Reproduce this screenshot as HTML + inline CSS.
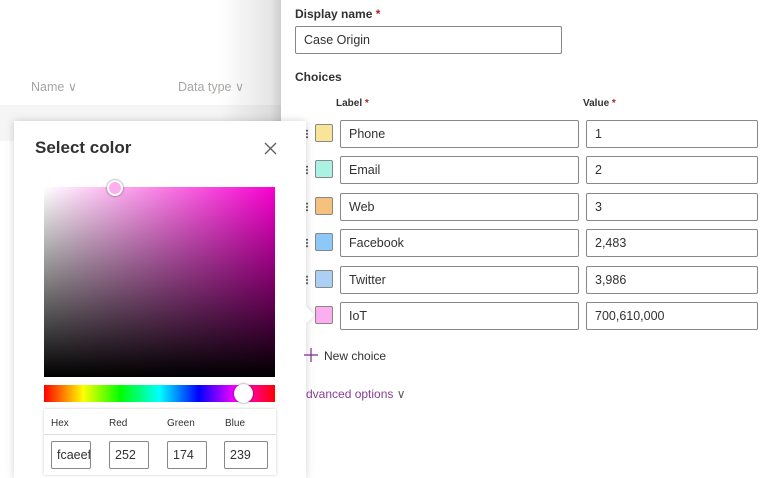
<!DOCTYPE html>
<html><head><style>
*{box-sizing:border-box;margin:0;padding:0}
body{width:768px;height:478px;overflow:hidden;position:relative;background:#fff;font-family:"Liberation Sans","DejaVu Sans",sans-serif;color:#323130}
.abs{position:absolute}
.inp{position:absolute;border:1px solid #8a8886;border-radius:2px;background:#fff;font-size:12.5px;padding-left:8px;display:flex;align-items:center;color:#323130}
.sw{position:absolute;width:18px;height:18px;border:1px solid #8a8886;border-radius:2px}
.dots{position:absolute;width:2px;height:10px;background:radial-gradient(circle,#555 0.9px,transparent 1.1px) 0 0/2px 3.3px;z-index:5}
</style></head><body>
<div class="abs" style="left:0;top:0;width:281px;height:478px;background:linear-gradient(90deg,#fff 0,#fff 220px,#e6e6e6 270px,#cfcfcf 281px)"></div>
<div class="abs" style="left:0;top:105px;width:281px;height:36px;background:rgba(0,0,0,0.04)"></div>
<div class="abs" style="left:31px;top:79px;font-size:12.5px;color:#a8a6a4">Name ∨</div>
<div class="abs" style="left:178px;top:79px;font-size:12.5px;color:#a8a6a4">Data type ∨</div>

<div class="abs" style="left:281px;top:0;width:487px;height:478px;background:#fff"></div>
<div class="abs" style="left:295px;top:7px;font-size:12px;font-weight:bold">Display name <span style="color:#a4262c">*</span></div>
<div class="inp" style="left:295px;top:26px;width:267px;height:28px">Case Origin</div>
<div class="abs" style="left:295px;top:70px;font-size:12px;font-weight:bold">Choices</div>
<div class="abs" style="left:336px;top:98px;font-size:10px;font-weight:bold">Label <span style="color:#a4262c">*</span></div>
<div class="abs" style="left:583px;top:98px;font-size:10px;font-weight:bold">Value <span style="color:#a4262c">*</span></div>

<div class="dots" style="left:306px;top:129px"></div><div class="sw" style="left:315px;top:124px;background:#f8e59a"></div>
<div class="inp" style="left:340px;top:120px;width:239px;height:28px">Phone</div><div class="inp" style="left:586px;top:120px;width:172px;height:28px">1</div>
<div class="dots" style="left:306px;top:165px"></div><div class="sw" style="left:315px;top:160px;background:#a9f2e4"></div>
<div class="inp" style="left:340px;top:156px;width:239px;height:28px">Email</div><div class="inp" style="left:586px;top:156px;width:172px;height:28px">2</div>
<div class="dots" style="left:306px;top:202px"></div><div class="sw" style="left:315px;top:197px;background:#f4c17f"></div>
<div class="inp" style="left:340px;top:193px;width:239px;height:28px">Web</div><div class="inp" style="left:586px;top:193px;width:172px;height:28px">3</div>
<div class="dots" style="left:306px;top:238px"></div><div class="sw" style="left:315px;top:233px;background:#8ec8f8"></div>
<div class="inp" style="left:340px;top:229px;width:239px;height:28px">Facebook</div><div class="inp" style="left:586px;top:229px;width:172px;height:28px">2,483</div>
<div class="dots" style="left:306px;top:275px"></div><div class="sw" style="left:315px;top:270px;background:#acd0f4"></div>
<div class="inp" style="left:340px;top:266px;width:239px;height:28px">Twitter</div><div class="inp" style="left:586px;top:266px;width:172px;height:28px">3,986</div>
<div class="sw" style="left:315px;top:306px;background:#fcaeef"></div>
<div class="inp" style="left:340px;top:302px;width:239px;height:28px">IoT</div><div class="inp" style="left:586px;top:302px;width:172px;height:28px">700,610,000</div>

<svg class="abs" style="left:304px;top:348px;z-index:5" width="14" height="14"><path d="M7 0V14M0 7H14" stroke="#7a2e8a" stroke-width="1.2"/></svg>
<div class="abs" style="left:324px;top:349px;font-size:12px">New choice</div>
<div class="abs" style="left:306px;top:387px;font-size:12px;color:#8a3c96;z-index:5">dvanced options <span style="color:#605e5c">∨</span></div>

<div class="abs" style="left:14px;top:121px;width:292px;height:357px;background:#fff;box-shadow:0 0 8px rgba(0,0,0,0.18)"></div>
<div class="abs" style="left:300px;top:309px;width:12px;height:12px;background:#fff;transform:rotate(45deg);box-shadow:2px -2px 4px rgba(0,0,0,0.08)"></div>
<div class="abs" style="left:14px;top:121px;width:292px;height:357px;background:#fff"></div>
<div class="abs" style="left:35px;top:138px;font-size:17px;font-weight:600;color:#323130">Select color</div>
<svg class="abs" style="left:264px;top:142px" width="13" height="13"><path d="M1 1L12 12M12 1L1 12" stroke="#605e5c" stroke-width="1.3"/></svg>
<div class="abs" style="left:44px;top:187px;width:231px;height:190px;background:linear-gradient(to bottom,transparent,#000),linear-gradient(to right,#fff,#f700d0)"></div>
<div class="abs" style="left:107px;top:180px;width:16px;height:16px;border-radius:50%;border:2px solid #fff;background:#fcaeef;box-shadow:0 0 2px rgba(0,0,0,0.6)"></div>
<div class="abs" style="left:44px;top:385px;width:231px;height:17px;background:linear-gradient(to right,#f00,#ff0 17%,#0f0 33%,#0ff 50%,#00f 67%,#f0f 83%,#f00)"></div>
<div class="abs" style="left:234px;top:384px;width:19px;height:19px;border-radius:50%;background:#fff;box-shadow:0 0 2px rgba(0,0,0,0.6)"></div>
<div class="abs" style="left:44px;top:409px;width:232px;height:66px;background:#fff;box-shadow:0 0 3px rgba(0,0,0,0.2)"></div>
<div class="abs" style="left:44px;top:434px;width:232px;height:1px;background:#e1dfdd"></div>
<div class="abs" style="left:51px;top:418px;font-size:10px">Hex</div>
<div class="abs" style="left:109px;top:418px;font-size:10px">Red</div>
<div class="abs" style="left:167px;top:418px;font-size:10px">Green</div>
<div class="abs" style="left:225px;top:418px;font-size:10px">Blue</div>
<div class="inp" style="left:51px;top:441px;width:40px;height:28px;padding-left:5px;overflow:hidden;white-space:nowrap">fcaeef</div>
<div class="inp" style="left:109px;top:441px;width:40px;height:28px;padding-left:5px">252</div>
<div class="inp" style="left:167px;top:441px;width:40px;height:28px;padding-left:5px">174</div>
<div class="inp" style="left:224px;top:441px;width:44px;height:28px;padding-left:5px">239</div>
</body></html>
